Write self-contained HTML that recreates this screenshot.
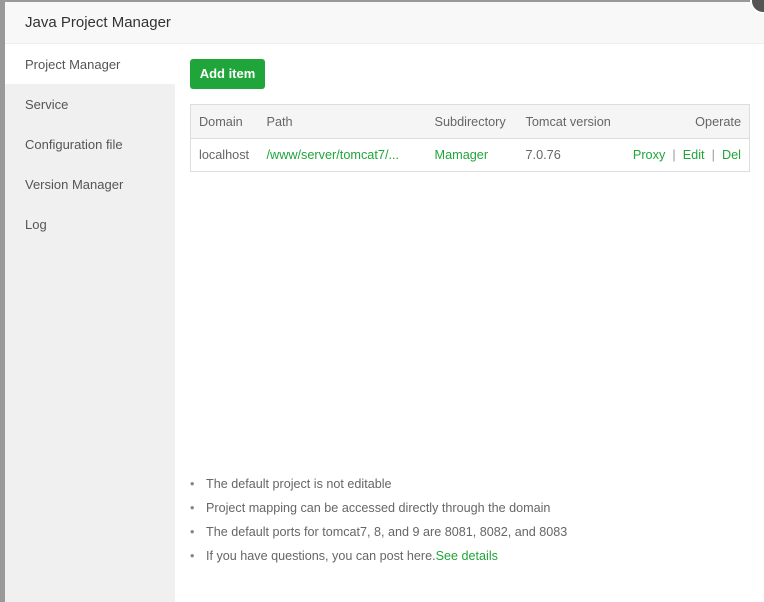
<!DOCTYPE html>
<html><head><meta charset="utf-8"><style>
*{margin:0;padding:0;box-sizing:border-box}
body{width:764px;height:594px;overflow:hidden;background:#999;font-family:"Liberation Sans",sans-serif;position:relative}
.modal{position:absolute;left:5px;top:2px;width:800px;height:600px;background:#fff}
.hd{height:42px;background:#f8f8f8;border-bottom:1px solid #eee;padding-left:20px;line-height:41px;font-size:15px;color:#333}
.side{position:absolute;left:0;top:42px;width:170px;bottom:0;background:#f0f0f0}
.side div{height:40px;line-height:42px;padding-left:20px;font-size:13px;color:#555}
.side .on{background:#fff}
.btn{position:absolute;left:185px;top:57px;width:75px;height:30px;background:#20a53a;color:#fff;border-radius:3px;font-size:13px;font-weight:bold;text-align:center;line-height:30px}
table{position:absolute;left:185px;top:102px;width:560px;border-collapse:collapse;border:1px solid #ddd;font-size:12.7px;color:#666}
th{background:#f5f5f5;font-weight:normal;text-align:left;height:34px;border-bottom:1px solid #ddd;padding-left:8px}
td{height:33px;padding-left:8px}
.g{color:#20a53a}
ul{position:absolute;left:185px;top:472px;list-style:none;font-size:12.6px;color:#666}
li{height:24px;line-height:20px;white-space:nowrap}
li:before{content:"•";color:#888;display:inline-block;width:16px}
.x{position:absolute;left:750px;top:-12px;width:26px;height:26px;border-radius:50%;background:#555;border:2px solid #fff}
</style></head><body>
<div class="modal">
<div class="hd">Java Project Manager</div>
<div class="side"><div class="on">Project Manager</div><div>Service</div><div>Configuration file</div><div>Version Manager</div><div>Log</div></div>
<div class="btn">Add item</div>
<table>
<tr><th style="width:68px">Domain</th><th style="width:168px">Path</th><th style="width:91px">Subdirectory</th><th>Tomcat version</th><th style="text-align:right;padding-right:8px">Operate</th></tr>
<tr><td>localhost</td><td class="g">/www/server/tomcat7/...</td><td class="g">Mamager</td><td>7.0.76</td><td class="g" style="text-align:right;padding-right:8px">Proxy&nbsp;&nbsp;<span style="color:#999">|</span>&nbsp;&nbsp;Edit&nbsp;&nbsp;<span style="color:#999">|</span>&nbsp;&nbsp;Del</td></tr>
</table>
<ul>
<li>The default project is not editable</li>
<li>Project mapping can be accessed directly through the domain</li>
<li>The default ports for tomcat7, 8, and 9 are 8081, 8082, and 8083</li>
<li>If you have questions, you can post here.<span class="g">See details</span></li>
</ul>
</div>
<div class="x"></div>
</body></html>
